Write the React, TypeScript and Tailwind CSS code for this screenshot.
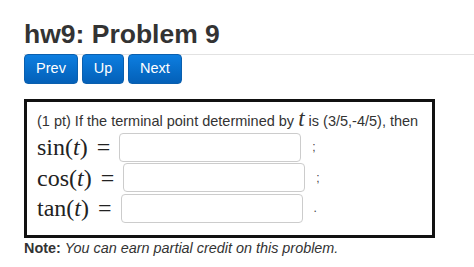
import React from 'react';

const serif = { fontFamily: '"Liberation Serif", "Times New Roman", serif' };

const MathLabel: React.FC<{ fn: string }> = ({ fn }) => (
    <span className="flex items-baseline text-[24px] leading-none text-[#222] whitespace-nowrap" style={serif}>
        <span>{fn}(<i>t</i>)</span>
        <span className="ml-[9px]">=</span>
    </span>
);

const AnswerRow: React.FC<{ fn: string; end: string }> = ({ fn, end }) => (
    <div className="flex items-center h-[30.5px]">
        <MathLabel fn={fn} />
        <input
            type="text"
            className="ml-[9px] w-[182px] h-[29px] border border-[#cccccc] rounded-[4px] bg-white outline-none"
        />
        <span className="ml-[11px] text-[12px] text-[#444]">{end}</span>
    </div>
);

export default function App() {
    const buttons = [
        { label: 'Prev', w: 'w-[54px]' },
        { label: 'Up', w: 'w-[42px]' },
        { label: 'Next', w: 'w-[54px]' },
    ];

    return (
        <div className="w-[474px] h-[267px] bg-white overflow-hidden text-[#333]" style={{ fontFamily: '"Liberation Sans", Arial, sans-serif' }}>
            <div className="pl-[24px] pt-[19px]">
                {/* Title */}
                <h1 className="text-[26.5px] font-bold leading-[30px] text-[#333] pb-[5px] border-b border-[#e2e2e2]">
                    hw9: Problem 9
                </h1>

                {/* Nav buttons */}
                <div className="flex gap-[4px] -mt-px">
                    {buttons.map(b => (
                        <button
                            key={b.label}
                            className={`${b.w} h-[30px] rounded-[4px] border border-[#0a5fae] bg-gradient-to-b from-[#0d7ee0] to-[#0460b8] text-white text-[14.5px] flex items-center justify-center`}
                        >
                            {b.label}
                        </button>
                    ))}
                </div>

                {/* Problem box */}
                <div className="mt-[15px] w-[411px] border-[3px] border-[#111] pl-[10px] pt-[11px] pb-[11px]">
                    <p className="text-[14.5px] leading-[16px] text-[#333] whitespace-nowrap">
                        (1 pt) If the terminal point determined by{' '}
                        <i className="text-[23px] leading-[0]" style={serif}>t</i>{' '}
                        is (3/5,-4/5), then
                    </p>
                    <div className="flex flex-col mt-[3px]">
                        <AnswerRow fn="sin" end=";" />
                        <AnswerRow fn="cos" end=";" />
                        <AnswerRow fn="tan" end="." />
                    </div>
                </div>

                {/* Note */}
                <p className="mt-[2px] text-[14.4px] leading-[16px] text-[#333]">
                    <b>Note:</b> <i>You can earn partial credit on this problem.</i>
                </p>
            </div>
        </div>
    );
}
